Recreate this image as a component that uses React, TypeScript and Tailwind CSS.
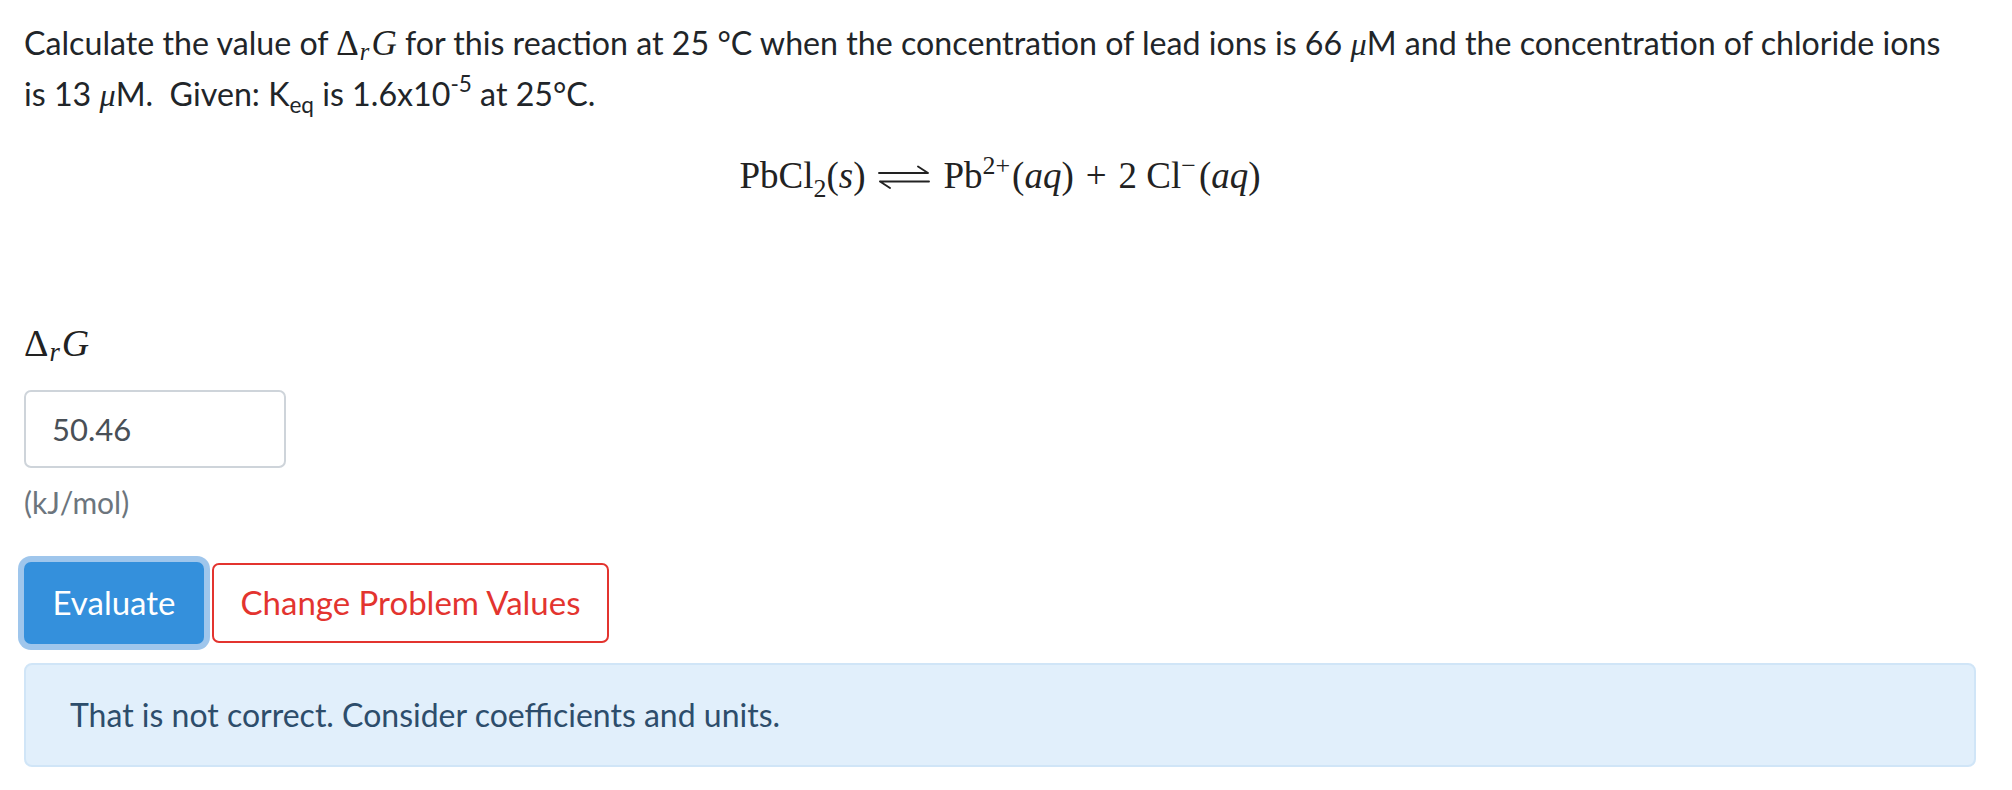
const SANS = "font-['Lato','Open_Sans',sans-serif]";
const SERIF = "font-['Liberation_Serif','DejaVu_Serif',serif]";

function Harpoons() {
  return (
    <svg width="54" height="24" viewBox="0 0 54 24" className="mx-[12px] inline-block align-[-1px]">
      <path d="M2 8 H51 M51 8 L41 1.5" stroke="#222" strokeWidth="1.9" fill="none" strokeLinecap="round" />
      <path d="M3 16.5 H52 M3 16.5 L13 23" stroke="#222" strokeWidth="1.9" fill="none" strokeLinecap="round" />
    </svg>
  );
}

function DeltaRG({ size }: { size: string }) {
  return (
    <span className={`${SERIF} ${size} text-[#222]`}>
      Δ<sub className="static ml-[1px] mr-[2px] text-[0.7em] italic align-[-0.2em]">r</sub>
      <span className="italic">G</span>
    </span>
  );
}

export default function App() {
  return (
    <div className={`${SANS} pl-[24px] pr-[36px] pt-[18px] text-[#212529]`}>
      <p className="text-[32.2px] leading-[49px] whitespace-nowrap">
        Calculate the value of <DeltaRG size="text-[35px]" /> for this reaction at 25 °C when the concentration of lead
        ions is 66 <span className={`${SERIF} italic`}>μ</span>M and the concentration of chloride ions
        <br />
        is 13 <span className={`${SERIF} italic`}>μ</span>M.&nbsp; Given: K
        <sub className="static text-[0.7em] align-[-0.3em]">eq</sub> is 1.6x10
        <sup className="static text-[0.7em] align-[0.6em]">-5</sup> at 25°C.
      </p>

      <div className={`${SERIF} mt-[32px] flex justify-center text-[37px] leading-[48px] text-[#222]`}>
        <span className="whitespace-nowrap">
          PbCl<sub className="static text-[0.7em] align-[-0.33em]">2</sub>(<span className="italic">s</span>)
          <Harpoons />
          Pb<sup className="static text-[0.7em] align-[0.55em]">2+</sup>
          <span className="ml-[2px]">(</span>
          <span className="italic">aq</span>)<span className="mx-[12px]">+</span>2 Cl
          <sup className="static text-[0.7em] align-[0.55em]">−</sup>
          <span className="ml-[3px]">(</span>
          <span className="italic">aq</span>)
        </span>
      </div>

      <div className="mt-[123px] leading-[40px]">
        <DeltaRG size="text-[38px]" />
      </div>

      <div className="mt-[20px] flex h-[78px] w-[262px] items-center rounded-[7px] border-2 border-[#ced4da] bg-white px-[26px] text-[31px] text-[#495057]">
        50.46
      </div>

      <div className="mt-[14px] text-[30px] leading-[40px] text-[#6c757d]">(kJ/mol)</div>

      <div className="mt-[40px] flex items-center gap-[8px]">
        <button className="h-[82px] w-[180px] rounded-[7px] bg-[#3490dc] text-[33px] text-white ring-[6px] ring-[#9fc6ec]">
          Evaluate
        </button>
        <button className="h-[80px] w-[397px] rounded-[7px] border-2 border-[#e3342f] bg-white text-[33px] text-[#e3342f]">
          Change Problem Values
        </button>
      </div>

      <div className="mt-[19px] flex h-[104px] items-center rounded-[8px] border-2 border-[#d0e5f7] bg-[#e1effb] px-[44px] text-[32px] text-[#2d4d6b]">
        That is not correct. Consider coefficients and units.
      </div>
    </div>
  );
}
